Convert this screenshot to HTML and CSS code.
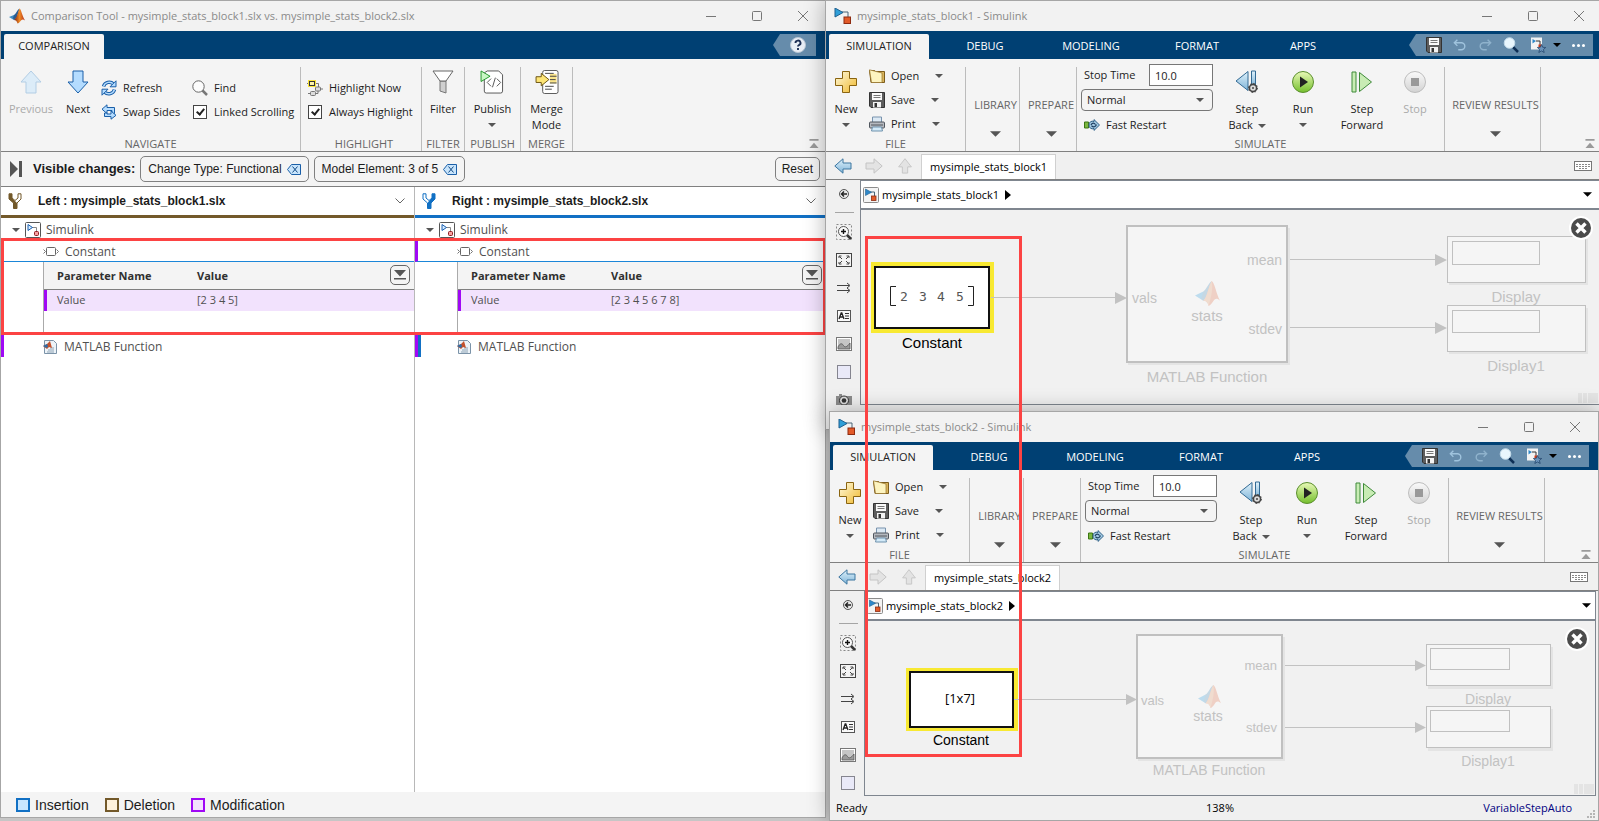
FILE: index.html
```html
<!DOCTYPE html>
<html lang="en">
<head>
<meta charset="utf-8">
<title>Comparison Tool</title>
<link rel="stylesheet" href="styles.css">
</head>
<body>
<svg class="defs" aria-hidden="true">
  <defs>
    <linearGradient id="gGold" x1="0" y1="0" x2="1" y2="1"><stop offset="0" stop-color="#fffbe0"/><stop offset="1" stop-color="#efb82c"/></linearGradient>
    <linearGradient id="gGreen" x1="0" y1="0" x2="0" y2="1"><stop offset="0" stop-color="#e9f9b8"/><stop offset="1" stop-color="#74bf2c"/></linearGradient>
    <linearGradient id="gGrey" x1="0" y1="0" x2="0" y2="1"><stop offset="0" stop-color="#fafafa"/><stop offset="1" stop-color="#d2d2d2"/></linearGradient>
    <linearGradient id="gBlue" x1="0" y1="0" x2="0" y2="1"><stop offset="0" stop-color="#e0f2fb"/><stop offset="1" stop-color="#7fb4d8"/></linearGradient>
    <linearGradient id="gMat" x1="0" y1="0" x2="1" y2="0"><stop offset="0" stop-color="#7a1b10"/><stop offset=".5" stop-color="#f08a24"/><stop offset="1" stop-color="#b5301a"/></linearGradient>
  </defs>
  <symbol id="matlab" viewBox="0 0 16 16"><path d="M0 9 5 7l3 2-3 3z" fill="#3f8cc4"/><path d="M5 7c2-1 3-5 5.500-6.500L8 9l-3 3-1-2z" fill="#2b5e93"/><path d="M10.500.500C12 1 13 7 16 12.500c-2-2-3.500-1-4.500.5-1 1.500-2 2.500-3 2.500C8 13 6.500 12 5 12c3-2 4-8 5.500-11.500z" fill="url(#gMat)"/></symbol>
  <symbol id="matlab-dim" viewBox="0 0 24 24"><path d="M0 14 8 10l4 4-4 5z" fill="#bddcee"/><path d="M8 10c3-2 5-8 8-10l-4 14-4 5-2-2z" fill="#c5d8e4"/><path d="M16 0c3 2 4 11 8 19-3-3-5-2-6.500.5S14 24 13 24c-.5-3-2-5-5-5 4-4 5-14 8-19z" fill="#efd0c5"/><path d="M16 0c1 5 1 11-3 24-.5-3-2-5-5-5 4-4 5-14 8-19z" fill="#f0dccf"/></symbol>
  <symbol id="model" viewBox="0 0 17 16"><path d="M8 4h6v5" fill="none" stroke="#4b6577"/><path d="M1 0v9l8-4.500z" fill="#2f9fd8" stroke="#1e5f8e"/><rect x="10" y="9" width="6.500" height="6.500" fill="#e25a28" stroke="#8e2b10"/></symbol>
  <symbol id="model-box" viewBox="0 0 16 16"><rect x=".5" y=".5" width="15" height="15" rx="1" fill="#f4f4f4" stroke="#8b8b8b"/><path d="M7 5h4.500v4" fill="none" stroke="#4b6577"/><path d="M2.500 2v6.500l6-3.200z" fill="#2f87c8" stroke="#1e5f8e" stroke-width=".6"/><rect x="8.500" y="9" width="4.500" height="4.500" fill="#e25a28" stroke="#8e2b10" stroke-width=".8"/></symbol>
  <symbol id="model-tree" viewBox="0 0 16 16"><rect x=".5" y=".5" width="15" height="15" rx="1" fill="#fff" stroke="#555"/><path d="M7 5.500h4.500v4" fill="none" stroke="#888"/><path d="M3 2.500v6l4.500-3z" fill="#d6ecff" stroke="#1a5fb0"/><rect x="9.500" y="9.500" width="4" height="4" rx="1" fill="#f8a0a0" stroke="#8e1b20"/></symbol>
  <symbol id="up" viewBox="0 0 22 24"><path d="M11 1 21 12h-5v11H6V12H1z" fill="#dcecf8" stroke="#b2cde4"/></symbol>
  <symbol id="down" viewBox="0 0 22 24"><path d="M11 23 21 12h-5V1H6v11H1z" fill="#b4dcff" stroke="#1a5fa8"/></symbol>
  <symbol id="refresh" viewBox="0 0 16 16"><path d="M2.500 6.500a6 6 0 0 1 10-2.500M13.500 9.500a6 6 0 0 1-10 2.500" fill="none" stroke="#1a5fa8" stroke-width="3.400"/><path d="M2.500 6.500a6 6 0 0 1 10-2.500M13.500 9.500a6 6 0 0 1-10 2.500" fill="none" stroke="#b4dcff" stroke-width="1.400"/><path d="M15 .8v6H9zM1 15.200v-6h6z" fill="#b4dcff" stroke="#1a5fa8"/></symbol>
  <symbol id="swap" viewBox="0 0 16 16"><path d="M6 .8v2.700h7.500v6H11v-3H6v3L1 5.200z" fill="#b4dcff" stroke="#1a5fa8"/><path d="M10 15.200v-2.700H3.500V9H6v1h4V7l5 4.300z" fill="#b4dcff" stroke="#1a5fa8"/></symbol>
  <symbol id="find" viewBox="0 0 16 16"><path d="m10.500 10.500 4.500 4.500" stroke="#777" stroke-width="2.500"/><circle cx="6.500" cy="6.500" r="5.700" fill="#fcfcfc" stroke="#666"/></symbol>
  <symbol id="hilite" viewBox="0 0 16 16"><path d="M8 3.500h3.500V7M1 13.500h3M8.500 13.500H11V11" fill="none" stroke="#777"/><path d="M0 3.500h2M13 9h3" stroke="#777"/><path d="M1 0h8v7H1z" fill="#f8e33c"/><rect x="2.500" y="1.500" width="5" height="4" fill="#fbf3a8" stroke="#333"/><rect x="8.500" y="7" width="5" height="4" rx="1" fill="#ddd" stroke="#777"/><rect x="3.500" y="11.500" width="5" height="4" rx="1" fill="#ddd" stroke="#777"/></symbol>
  <symbol id="filter" viewBox="0 0 22 24"><path d="M8 11h6v12l-6-2z" fill="#cfcfcf" stroke="#777"/><path d="M1 1h20l-7 10H8z" fill="#fff" stroke="#666"/></symbol>
  <symbol id="publish" viewBox="0 0 24 25"><path d="M7 1h12l4 4v17a2 2 0 0 1-2 2H6a2 2 0 0 1-2-2V3z" fill="#fff" stroke="#555"/><path d="m11 9-4 4 4 4M17 9l4 4-4 4M15.500 8l-3 10" fill="none" stroke="#555"/><path d="M.6 1v11L10 6.500z" fill="#c9f7c4" stroke="#1f9428"/></symbol>
  <symbol id="merge" viewBox="0 0 24 25"><rect x="7.500" y=".5" width="16" height="24" rx="2" fill="#fff" stroke="#555"/><path d="M15 4h7v10h-7z" fill="#fbe58a"/><path d="M10 3.500h9M10 17h9M10 20h7M15 6.500h7M15 10h6M15 13.500h7" stroke="#444"/><path d="M.6 7H6V3.500L14 10l-8 6.500V13H.6z" fill="#fde576" stroke="#6b5310"/></symbol>
  <symbol id="collapse" viewBox="0 0 10 11"><path d="M0 0h10v2H0zM5 4l5 6H0z" fill="#9a9a9a"/></symbol>
  <symbol id="skip" viewBox="0 0 12 16"><path d="M0 0v16l8-8zM9 0h3v16H9z" fill="#555"/></symbol>
  <symbol id="clear" viewBox="0 0 14 11"><path d="M4.500.5h9v10h-9l-4-5z" fill="#c8e4fb" stroke="#1a5fa8"/><path d="m5.500 2.500 5 6M10.500 2.500l-5 6" stroke="#124a85"/></symbol>
  <symbol id="fork" viewBox="0 0 14 16"><path d="M1 .8h3V5l3 2.500L10 5V.8h3V6L9 10v5.500H5.500V10L1 6z" fill="#fff" stroke="currentColor"/></symbol>
  <symbol id="fork-l" viewBox="0 0 14 16"><use href="#fork"/><path d="M1 .8h3V5l3 3 2 2v5.500H5.500V10L1 6z" fill="currentColor"/></symbol>
  <symbol id="fork-r" viewBox="0 0 14 16"><use href="#fork"/><path d="M13 .8h-3V5L7 8l-1.500 2v5.500H9V10l4-4z" fill="currentColor"/></symbol>
  <symbol id="block" viewBox="0 0 16 10"><path d="m.5 2.500 2 2-2 2M13.500 2.500l2 2-2 2" fill="none" stroke="#777"/><rect x="3.500" y=".5" width="9" height="8" rx="1" fill="#fff" stroke="#666"/></symbol>
  <symbol id="fcn" viewBox="0 0 14 14"><path d="M1.500.5h9l3 3v10h-12z" fill="#edf3f8" stroke="#7b93a8"/><path d="M7 8h4M5 10h6M4 12h7" stroke="#8da3b5"/><path d="m0 6 4-2 3-3 2 7-3-1-2 2z" fill="#c4512c"/><path d="m0 6 4-2 1 2-1 2z" fill="#2d6ea8"/></symbol>
  <symbol id="expand" viewBox="0 0 12 10"><path d="M0 0h12L6 6.500zM0 8h12v1.600H0z" fill="#555"/></symbol>
  <symbol id="caret" viewBox="0 0 8 4"><path d="M0 0h8L4 4z" fill="currentColor"/></symbol>
  <symbol id="chev" viewBox="0 0 10 6"><path d="m.5.5 4.500 4.500L9.500.5" fill="none" stroke="#666"/></symbol>
  <symbol id="min" viewBox="0 0 10 10"><path d="M0 5.500h10" stroke="#777"/></symbol>
  <symbol id="max" viewBox="0 0 10 10"><rect x=".5" y=".5" width="9" height="9" rx="1" fill="none" stroke="#777"/></symbol>
  <symbol id="x" viewBox="0 0 10 10"><path d="m0 0 10 10M10 0 0 10" stroke="#777"/></symbol>
  <symbol id="help" viewBox="0 0 16 16"><circle cx="8" cy="8" r="7.500" fill="#e8eef5" stroke="#b9c6d4"/><path d="M5.500 6a2.500 2.300 0 1 1 3.500 2c-.8.400-1 .7-1 1.500M8 11v2" fill="none" stroke="#1c2f55" stroke-width="1.900"/></symbol>
  <symbol id="new" viewBox="0 0 22 22"><path d="M7.500.5h7v7h7v7h-7v7h-7v-7h-7v-7h7z" fill="url(#gGold)" stroke="#8a6410"/></symbol>
  <symbol id="open" viewBox="0 0 16 14"><path d="M.5 1.500h5l1 1h9v11H2z" fill="#d9b45c" stroke="#7c5d1b"/><path d="M.5.8 13 4v9.500H2.500z" fill="#fdf4c0" stroke="#94702a" stroke-width=".7"/></symbol>
  <symbol id="save" viewBox="0 0 16 16"><path d="M.5.5h15v15H2l-1.500-1.500z" fill="#5d5d5d" stroke="#333"/><path d="M3 1h10v7H3z" fill="#fafafa"/><path d="M4.500 3.500h7M4.500 5.500h7" stroke="#777"/><path d="M4 10h8v5.500H4z" fill="#f2f2f2"/><path d="M5.500 11h2.500v4H5.500z" fill="#333"/></symbol>
  <symbol id="print" viewBox="0 0 16 15"><path d="M3.500.5h9v6h-9z" fill="#dce9f4" stroke="#7893ad"/><rect x=".5" y="5.500" width="15" height="6" rx="1" fill="#b5b9bf" stroke="#50565e"/><path d="M2 8.500h12" stroke="#50565e"/><path d="M3.500 10.500h9l1 4h-11z" fill="#d3eaf8" stroke="#6f92ad"/></symbol>
  <symbol id="fast" viewBox="0 0 16 12"><path d="M.5 3h4v6h-4z" fill="#7bb63e" stroke="#3b7612"/><path d="M5 6a3.500 3.500 0 0 1 5-3.500V.6L15.500 6 10 11.400V9.500A3.500 3.500 0 0 1 5 6z" fill="#a5cbe4" stroke="#2d5f85"/><path d="M7 6c1-2.500 3-2.500 4.500-.5M12.500 5.500c-1 2.500-3 3-5 1.200" fill="none" stroke="#1d3f60" stroke-width="1.200"/></symbol>
  <symbol id="stepback" viewBox="0 0 24 23"><path d="M1 10.500 13 1v19z" fill="url(#gBlue)" stroke="#336a94"/><path d="M16.500.5h4v15h-4z" fill="url(#gBlue)" stroke="#336a94"/><circle cx="18" cy="17.500" r="3.600" fill="#ddd" stroke="#444" stroke-width="1.600"/><circle cx="18" cy="17.500" r="4.500" fill="none" stroke="#444" stroke-dasharray="1.500 2"/><circle cx="18" cy="17.500" r="1" fill="#444"/></symbol>
  <symbol id="run" viewBox="0 0 22 22"><circle cx="11" cy="11" r="10.500" fill="url(#gGreen)" stroke="#5b8f2e"/><path d="M8 5.500v11l8-5.500z" fill="#222"/></symbol>
  <symbol id="stepfwd" viewBox="0 0 22 22"><path d="M1 1h4v20H1z" fill="#c8ecb4" stroke="#3f8a3a"/><path d="M8.500 1.500v19L20.500 11z" fill="#c8ecb4" stroke="#3f8a3a"/></symbol>
  <symbol id="stop" viewBox="0 0 22 22"><circle cx="11" cy="11" r="10.500" fill="url(#gGrey)" stroke="#bdbdbd"/><path d="M7 7h8v8H7z" fill="#999"/></symbol>
  <symbol id="undo" viewBox="0 0 16 14"><path d="M1.500 4.500h8a4 4 0 0 1 0 8H6M5 1 1.500 4.500 5 8" fill="none" stroke="#9fc3dd" stroke-width="1.600"/></symbol>
  <symbol id="redo" viewBox="0 0 16 14"><path d="M14.500 4.500h-8a4 4 0 0 0 0 8H10M11 1l3.500 3.500L11 8" fill="none" stroke="#8fb2cc" stroke-width="1.600"/></symbol>
  <symbol id="lens" viewBox="0 0 16 16"><path d="m10 10 5 5" stroke="#0f2f55" stroke-width="2.500"/><circle cx="6.500" cy="6" r="5.300" fill="#e9f6fd" stroke="#c4dbe9"/></symbol>
  <symbol id="modelstar" viewBox="0 0 16 16"><path d="M1 .5h11v12H1z" fill="#f3f3f3"/><path d="M6 4h4v4" fill="none" stroke="#333"/><path d="M2.500 2v4.500L6 4z" fill="#2f87c8"/><path d="M8.500 7.500h3v3h-3z" fill="#d23a1a"/><path d="m11.500 7.500 1.200 2.800 3 .2-2.300 2 .8 3-2.700-1.600-2.700 1.600.8-3-2.300-2 3-.2z" fill="#6b93bb" stroke="#1c3f66" stroke-width=".7"/></symbol>
  <symbol id="dots" viewBox="0 0 13 3"><circle cx="1.500" cy="1.500" r="1.500" fill="#fff"/><circle cx="6.500" cy="1.500" r="1.500" fill="#fff"/><circle cx="11.500" cy="1.500" r="1.500" fill="#fff"/></symbol>
  <symbol id="left" viewBox="0 0 18 16"><path d="M.8 8 9 .8V5h8v6H9v4.200z" fill="url(#gBlue)" stroke="#3d76a0"/></symbol>
  <symbol id="right" viewBox="0 0 18 16"><path d="M17.200 8 9 .8V5H1v6h8v4.200z" fill="#e3e3e3" stroke="#c4c4c4"/></symbol>
  <symbol id="upnav" viewBox="0 0 16 18"><path d="M8 .8 15.200 10H11v7H5v-7H.8z" fill="#e3e3e3" stroke="#c4c4c4"/></symbol>
  <symbol id="keys" viewBox="0 0 18 10"><rect x=".5" y=".5" width="17" height="9" fill="#fff" stroke="#777"/><path d="M2 3.500h14M2 5.500h14M5 7.500h8" stroke="#888" stroke-dasharray="2 1"/></symbol>
  <symbol id="hide" viewBox="0 0 10 10"><circle cx="5" cy="5" r="4.500" fill="#e9e9e9" stroke="#555"/><path d="M8 5H3M5 2.500 2.500 5 5 7.500" fill="none" stroke="#222" stroke-width="1.400"/></symbol>
  <symbol id="zoomin" viewBox="0 0 16 16"><rect x=".5" y=".5" width="15" height="15" fill="none" stroke="#888" stroke-dasharray="2 2"/><path d="m11 11 4 4" stroke="#333" stroke-width="2.500"/><circle cx="7.500" cy="7.500" r="5" fill="#fafafa" stroke="#555"/><path d="M7.500 5v5M5 7.500h5" stroke="#111" stroke-width="1.400"/></symbol>
  <symbol id="fit" viewBox="0 0 16 14"><rect x=".5" y=".5" width="15" height="13" fill="#f4f4f4" stroke="#444"/><path d="M3 5V3h2.500M10.500 3H13v2M13 9v2h-2.500M5.500 11H3V9M3.500 3.500 6 6M12.500 3.500 10 6M12.500 10.500 10 8M3.500 10.500 6 8" fill="none" stroke="#444"/></symbol>
  <symbol id="arrows" viewBox="0 0 14 10"><path d="M0 2.500h12M0 7.500h12M10 0l3 2.500L10 5M10 5l3 2.500-3 2.500" fill="none" stroke="#444"/></symbol>
  <symbol id="anno" viewBox="0 0 14 12"><rect x=".5" y=".5" width="13" height="11" fill="#fafafa" stroke="#555"/><path d="m2 9 2.200-6h.6L7 9M3 7h3" fill="none" stroke="#222" stroke-width="1.300"/><path d="M8 3.500h4M8 6h4M8 8.500h4" stroke="#333"/></symbol>
  <symbol id="image" viewBox="0 0 16 14"><rect x=".5" y=".5" width="15" height="13" fill="#fff" stroke="#777"/><path d="M2 2h12v10H2z" fill="#c5c5c5"/><path d="M2 10c2-4 4-4 5.500-1.500S11 10 14 6v6H2z" fill="#9a9a9a" stroke="#555" stroke-width=".8"/></symbol>
  <symbol id="area" viewBox="0 0 14 14"><rect x=".5" y=".5" width="13" height="13" fill="#e9e9f8" stroke="#85858f"/></symbol>
  <symbol id="camera" viewBox="0 0 16 12"><path d="M0 2h3V0h3v2h10v10H0z" fill="#8b8b8b"/><circle cx="8" cy="6.500" r="4.500" fill="#ddd" stroke="#333"/><circle cx="8" cy="6.500" r="2.300" fill="#333"/></symbol>
  <symbol id="close" viewBox="0 0 24 24"><circle cx="12" cy="12" r="12" fill="#fff"/><circle cx="12" cy="12" r="10" fill="#4b4b4b"/><path d="m7.500 7.500 9 9M16.500 7.500l-9 9" stroke="#fff" stroke-width="3.400"/></symbol>
  <symbol id="bars" viewBox="0 0 20 10"><path d="M0 0h4v10H0zM5 0h4v10H5zM10 0h10v10H10z" fill="#e4e4e4"/></symbol>
  <symbol id="grip" viewBox="0 0 9 9"><path d="M6 0h2v2H6zM3 3h2v2H3zM6 3h2v2H6zM0 6h2v2H0zM3 6h2v2H3zM6 6h2v2H6z" fill="#b5b5b5"/></symbol>
</svg>

<main class="desktop">
  <section class="win compare">
    <header class="titlebar"><svg class="i16"><use href="#matlab"/></svg><h1>Comparison Tool - mysimple_stats_block1.slx vs. mysimple_stats_block2.slx</h1>
      <div class="winbtns"><button aria-label="Minimize"><svg><use href="#min"/></svg></button><button aria-label="Maximize"><svg><use href="#max"/></svg></button><button aria-label="Close"><svg><use href="#x"/></svg></button></div></header>
    <nav class="tabs"><button class="tab on">COMPARISON</button><div class="qat help"><button aria-label="Help"><svg class="i16"><use href="#help"/></svg></button></div></nav>
    <div class="ribbon">
      <div class="group g-nav"><div class="body">
        <button class="big off"><svg class="i22"><use href="#up"/></svg><span>Previous</span></button>
        <button class="big next"><svg class="i22"><use href="#down"/></svg><span>Next</span></button>
        <div class="rows two"><button class="row"><svg class="i16"><use href="#refresh"/></svg>Refresh</button><button class="row"><svg class="i16"><use href="#swap"/></svg>Swap Sides</button></div>
        <div class="rows two"><button class="row"><svg class="i16"><use href="#find"/></svg>Find</button><label class="row"><input type="checkbox" checked>Linked Scrolling</label></div>
      </div><h2>NAVIGATE</h2></div>
      <div class="group g-hi"><div class="body"><div class="rows two"><button class="row"><svg class="i16"><use href="#hilite"/></svg>Highlight Now</button><label class="row"><input type="checkbox" checked>Always Highlight</label></div></div><h2>HIGHLIGHT</h2></div>
      <div class="group g-fil"><div class="body mid"><button class="big"><svg class="i22"><use href="#filter"/></svg><span>Filter</span></button></div><h2>FILTER</h2></div>
      <div class="group g-pub"><div class="body mid"><button class="big"><svg class="i24"><use href="#publish"/></svg><span>Publish</span><svg class="car"><use href="#caret"/></svg></button></div><h2>PUBLISH</h2></div>
      <div class="group g-mer"><div class="body mid"><button class="big"><svg class="i24"><use href="#merge"/></svg><span>Merge<br>Mode</span></button></div><h2>MERGE</h2></div>
      <button class="collapse" aria-label="Collapse"><svg><use href="#collapse"/></svg></button>
    </div>
    <div class="filters">
      <button class="skip" aria-label="Hide filters"><svg><use href="#skip"/></svg></button><strong>Visible changes:</strong>
      <button class="chip">Change Type: Functional <svg><use href="#clear"/></svg></button>
      <button class="chip">Model Element: 3 of 5 <svg><use href="#clear"/></svg></button>
      <button class="chip reset">Reset</button>
    </div>
    <div class="panes">
      <article class="pane left">
        <header><svg class="fork"><use href="#fork-l"/></svg><h3>Left : mysimple_stats_block1.slx</h3><svg class="chev"><use href="#chev"/></svg></header>
        <div class="node root"><svg class="car"><use href="#caret"/></svg><svg class="i16"><use href="#model-tree"/></svg>Simulink</div>
        <div class="node leaf sel"><svg class="blk"><use href="#block"/></svg>Constant</div>
        <div class="params"><table><thead><tr><th>Parameter Name</th><th>Value</th><th class="act"><button aria-label="Expand"><svg><use href="#expand"/></svg></button></th></tr></thead><tbody><tr><td>Value</td><td colspan="2">[2 3 4 5]</td></tr></tbody></table></div>
        <div class="node leaf mod"><svg class="fcn"><use href="#fcn"/></svg>MATLAB Function</div>
      </article>
      <article class="pane right">
        <header><svg class="fork"><use href="#fork-r"/></svg><h3>Right : mysimple_stats_block2.slx</h3><svg class="chev"><use href="#chev"/></svg></header>
        <div class="node root"><svg class="car"><use href="#caret"/></svg><svg class="i16"><use href="#model-tree"/></svg>Simulink</div>
        <div class="node leaf sel mod"><svg class="blk"><use href="#block"/></svg>Constant</div>
        <div class="params"><table><thead><tr><th>Parameter Name</th><th>Value</th><th class="act"><button aria-label="Expand"><svg><use href="#expand"/></svg></button></th></tr></thead><tbody><tr><td>Value</td><td colspan="2">[2 3 4 5 6 7 8]</td></tr></tbody></table></div>
        <div class="node leaf mod cur"><svg class="fcn"><use href="#fcn"/></svg>MATLAB Function</div>
      </article>
    </div>
    <footer class="legend"><span><i class="ins"></i>Insertion</span><span><i class="del"></i>Deletion</span><span><i class="chg"></i>Modification</span></footer>
    <div class="mark wide"></div>
  </section>

  <div class="stack">
    <section class="win sim one">
      <header class="titlebar"><svg class="mdl"><use href="#model"/></svg><h1>mysimple_stats_block1 - Simulink</h1>
        <div class="winbtns"><button aria-label="Minimize"><svg><use href="#min"/></svg></button><button aria-label="Maximize"><svg><use href="#max"/></svg></button><button aria-label="Close"><svg><use href="#x"/></svg></button></div></header>
      <nav class="tabs"><button class="tab on">SIMULATION</button><button class="tab">DEBUG</button><button class="tab">MODELING</button><button class="tab">FORMAT</button><button class="tab">APPS</button>
        <div class="qat"><button aria-label="Save"><svg class="i16"><use href="#save"/></svg></button><button aria-label="Undo"><svg class="i14"><use href="#undo"/></svg></button><button aria-label="Redo"><svg class="i14"><use href="#redo"/></svg></button><button aria-label="Search"><svg class="i16"><use href="#lens"/></svg></button><button class="fav" aria-label="Favorites"><svg class="i16"><use href="#modelstar"/></svg><svg class="car"><use href="#caret"/></svg></button><button class="dots" aria-label="More"><svg><use href="#dots"/></svg></button></div></nav>
      <div class="ribbon">
        <div class="group g-file"><div class="body">
          <button class="big new"><svg class="i22"><use href="#new"/></svg><span>New</span><svg class="car"><use href="#caret"/></svg></button>
          <div class="rows"><button class="row"><svg class="i16"><use href="#open"/></svg>Open<svg class="car far"><use href="#caret"/></svg></button><button class="row"><svg class="i16"><use href="#save"/></svg>Save<svg class="car far"><use href="#caret"/></svg></button><button class="row"><svg class="i16"><use href="#print"/></svg>Print<svg class="car far"><use href="#caret"/></svg></button></div>
        </div><h2>FILE</h2></div>
        <button class="group fold g-lib">LIBRARY<svg class="tri"><use href="#caret"/></svg></button>
        <button class="group fold g-pre">PREPARE<svg class="tri"><use href="#caret"/></svg></button>
        <div class="group g-sim"><div class="body">
          <div class="form"><label class="stime">Stop Time<input type="text" value="10.0"></label><label class="mode"><select aria-label="Simulation mode"><option>Normal</option></select><svg class="car"><use href="#caret"/></svg></label><button class="row"><svg class="i16"><use href="#fast"/></svg>Fast Restart</button></div>
          <button class="big b1"><svg class="i24"><use href="#stepback"/></svg><span>Step<br>Back <svg class="car"><use href="#caret"/></svg></span></button>
          <button class="big b2"><svg class="i22"><use href="#run"/></svg><span>Run</span><svg class="car"><use href="#caret"/></svg></button>
          <button class="big b3"><svg class="i22"><use href="#stepfwd"/></svg><span>Step<br>Forward</span></button>
          <button class="big b4 off"><svg class="i22"><use href="#stop"/></svg><span>Stop</span></button>
        </div><h2>SIMULATE</h2></div>
        <button class="group fold g-rev">REVIEW RESULTS<svg class="tri"><use href="#caret"/></svg></button>
        <button class="collapse" aria-label="Collapse"><svg><use href="#collapse"/></svg></button>
      </div>
      <div class="docbar"><button aria-label="Back"><svg class="nav"><use href="#left"/></svg></button><button aria-label="Forward"><svg class="nav"><use href="#right"/></svg></button><button aria-label="Up"><svg class="nav"><use href="#upnav"/></svg></button><button class="doc">mysimple_stats_block1</button><button class="keys" aria-label="Keyboard"><svg><use href="#keys"/></svg></button></div>
      <div class="work">
        <aside class="palette"><button aria-label="Hide"><svg class="s10"><use href="#hide"/></svg></button><hr><button aria-label="Zoom"><svg class="i16"><use href="#zoomin"/></svg></button><button aria-label="Fit"><svg class="i16"><use href="#fit"/></svg></button><button aria-label="Sample time"><svg class="i14"><use href="#arrows"/></svg></button><button aria-label="Annotation"><svg class="i14"><use href="#anno"/></svg></button><button aria-label="Image"><svg class="i16"><use href="#image"/></svg></button><button aria-label="Area"><svg class="i14"><use href="#area"/></svg></button><button aria-label="Screenshot"><svg class="i16"><use href="#camera"/></svg></button></aside>
        <div class="editor">
          <div class="crumbs"><svg class="i16"><use href="#model-box"/></svg><a href="#">mysimple_stats_block1</a><span class="arrow"></span><button aria-label="History"><svg><use href="#caret"/></svg></button></div>
          <div class="canvas">
            <svg class="diagram"><g transform="translate(-861 -210)">
              <rect x="871" y="262" width="123" height="71" class="halo"/><rect x="875" y="267" width="114" height="61" class="const"/>
              <path d="M896 286.500h-5.500v19h5.500M968 286.500h5.500v19H968" class="brk"/>
              <g class="mono"><text x="904" y="301">2</text><text x="923" y="301">3</text><text x="941" y="301">4</text><text x="960" y="301">5</text></g>
              <text x="932" y="348" class="live t15">Constant</text>
              <path d="M991 297.500h125M1288 259.500h148M1288 327.500h148" class="wire"/><path d="M1115 292v12l12-6zM1435 254v12l12-6zM1435 322v12l12-6z" class="tip"/>
              <rect x="1128" y="228" width="162" height="137" class="shade"/><rect x="1127" y="226" width="160" height="136" class="fn"/>
              <g class="t14"><text x="1132" y="303">vals</text><text x="1282" y="265" class="end">mean</text><text x="1282" y="334" class="end">stdev</text></g><text x="1207" y="321" class="mid t15">stats</text>
              <use href="#matlab-dim" x="1195" y="281" width="25" height="25"/><text x="1207" y="382" class="mid t15">MATLAB Function</text>
              <g class="disp"><rect x="1449" y="239" width="139" height="46" class="shade"/><rect x="1447.500" y="236.500" width="138" height="46"/><rect x="1452.500" y="241.500" width="87" height="23"/><rect x="1449" y="308" width="139" height="46" class="shade"/><rect x="1447.500" y="305.500" width="138" height="46"/><rect x="1452.500" y="310.500" width="87" height="22"/></g>
              <text x="1516" y="302" class="mid t15">Display</text><text x="1516" y="371" class="mid t15">Display1</text>
            </g></svg>
            <button class="dismiss" aria-label="Close"><svg><use href="#close"/></svg></button><svg class="bars"><use href="#bars"/></svg>
          </div>
        </div>
      </div>
      <div class="status"></div>
    </section>

    <section class="win sim two">
      <header class="titlebar"><svg class="mdl"><use href="#model"/></svg><h1>mysimple_stats_block2 - Simulink</h1>
        <div class="winbtns"><button aria-label="Minimize"><svg><use href="#min"/></svg></button><button aria-label="Maximize"><svg><use href="#max"/></svg></button><button aria-label="Close"><svg><use href="#x"/></svg></button></div></header>
      <nav class="tabs"><button class="tab on">SIMULATION</button><button class="tab">DEBUG</button><button class="tab">MODELING</button><button class="tab">FORMAT</button><button class="tab">APPS</button>
        <div class="qat"><button aria-label="Save"><svg class="i16"><use href="#save"/></svg></button><button aria-label="Undo"><svg class="i14"><use href="#undo"/></svg></button><button aria-label="Redo"><svg class="i14"><use href="#redo"/></svg></button><button aria-label="Search"><svg class="i16"><use href="#lens"/></svg></button><button class="fav" aria-label="Favorites"><svg class="i16"><use href="#modelstar"/></svg><svg class="car"><use href="#caret"/></svg></button><button class="dots" aria-label="More"><svg><use href="#dots"/></svg></button></div></nav>
      <div class="ribbon">
        <div class="group g-file"><div class="body">
          <button class="big new"><svg class="i22"><use href="#new"/></svg><span>New</span><svg class="car"><use href="#caret"/></svg></button>
          <div class="rows"><button class="row"><svg class="i16"><use href="#open"/></svg>Open<svg class="car far"><use href="#caret"/></svg></button><button class="row"><svg class="i16"><use href="#save"/></svg>Save<svg class="car far"><use href="#caret"/></svg></button><button class="row"><svg class="i16"><use href="#print"/></svg>Print<svg class="car far"><use href="#caret"/></svg></button></div>
        </div><h2>FILE</h2></div>
        <button class="group fold g-lib">LIBRARY<svg class="tri"><use href="#caret"/></svg></button>
        <button class="group fold g-pre">PREPARE<svg class="tri"><use href="#caret"/></svg></button>
        <div class="group g-sim"><div class="body">
          <div class="form"><label class="stime">Stop Time<input type="text" value="10.0"></label><label class="mode"><select aria-label="Simulation mode"><option>Normal</option></select><svg class="car"><use href="#caret"/></svg></label><button class="row"><svg class="i16"><use href="#fast"/></svg>Fast Restart</button></div>
          <button class="big b1"><svg class="i24"><use href="#stepback"/></svg><span>Step<br>Back <svg class="car"><use href="#caret"/></svg></span></button>
          <button class="big b2"><svg class="i22"><use href="#run"/></svg><span>Run</span><svg class="car"><use href="#caret"/></svg></button>
          <button class="big b3"><svg class="i22"><use href="#stepfwd"/></svg><span>Step<br>Forward</span></button>
          <button class="big b4 off"><svg class="i22"><use href="#stop"/></svg><span>Stop</span></button>
        </div><h2>SIMULATE</h2></div>
        <button class="group fold g-rev">REVIEW RESULTS<svg class="tri"><use href="#caret"/></svg></button>
        <button class="collapse" aria-label="Collapse"><svg><use href="#collapse"/></svg></button>
      </div>
      <div class="docbar"><button aria-label="Back"><svg class="nav"><use href="#left"/></svg></button><button aria-label="Forward"><svg class="nav"><use href="#right"/></svg></button><button aria-label="Up"><svg class="nav"><use href="#upnav"/></svg></button><button class="doc">mysimple_stats_block2</button><button class="keys" aria-label="Keyboard"><svg><use href="#keys"/></svg></button></div>
      <div class="work">
        <aside class="palette"><button aria-label="Hide"><svg class="s10"><use href="#hide"/></svg></button><hr><button aria-label="Zoom"><svg class="i16"><use href="#zoomin"/></svg></button><button aria-label="Fit"><svg class="i16"><use href="#fit"/></svg></button><button aria-label="Sample time"><svg class="i14"><use href="#arrows"/></svg></button><button aria-label="Annotation"><svg class="i14"><use href="#anno"/></svg></button><button aria-label="Image"><svg class="i16"><use href="#image"/></svg></button><button aria-label="Area"><svg class="i14"><use href="#area"/></svg></button></aside>
        <div class="editor">
          <div class="crumbs"><svg class="i16"><use href="#model-box"/></svg><a href="#">mysimple_stats_block2</a><span class="arrow"></span><button aria-label="History"><svg><use href="#caret"/></svg></button></div>
          <div class="canvas">
            <svg class="diagram"><g transform="translate(-865 -621)">
              <rect x="906" y="668" width="112" height="63" class="halo"/><rect x="910" y="672" width="103" height="55" class="const"/>
              <text x="960" y="703" class="live t13 open">[1x7]</text><text x="961" y="745" class="live t14">Constant</text>
              <path d="M1014 699.500h112M1282 665.500h133M1282 727.500h133" class="wire"/><path d="M1126 694v11l11-5.500zM1415 660v11l11-5.500zM1415 722v11l11-5.500z" class="tip"/>
              <rect x="1138" y="637" width="147" height="124" class="shade"/><rect x="1137" y="635" width="145" height="123" class="fn"/>
              <g class="t13"><text x="1141" y="705">vals</text><text x="1277" y="670" class="end">mean</text><text x="1277" y="732" class="end">stdev</text></g><text x="1208" y="721" class="mid t14">stats</text>
              <use href="#matlab-dim" x="1198" y="685" width="23" height="23"/><text x="1209" y="775" class="mid t14">MATLAB Function</text>
              <g class="disp"><rect x="1428" y="647" width="125" height="42" class="shade"/><rect x="1426.500" y="644.500" width="124" height="41"/><rect x="1430.500" y="648.500" width="79" height="21"/><rect x="1428" y="709" width="125" height="42" class="shade"/><rect x="1426.500" y="706.500" width="124" height="41"/><rect x="1430.500" y="710.500" width="79" height="21"/></g>
              <text x="1488" y="704" class="mid t14">Display</text><text x="1488" y="766" class="mid t14">Display1</text>
            </g></svg>
            <button class="dismiss" aria-label="Close"><svg><use href="#close"/></svg></button><svg class="bars"><use href="#bars"/></svg>
          </div>
        </div>
      </div>
      <div class="status"><span>Ready</span><span>138%</span><a href="#">VariableStepAuto</a><svg class="grip"><use href="#grip"/></svg></div>
    </section>
    <div class="mark tall"></div>
  </div>
</main>
</body>
</html>
```
FILE: styles.css
```css
* { box-sizing: border-box; }
html, body { height: 100%; margin: 0; }
body { font-family: "Open Sans", "Noto Sans", sans-serif; font-size: 11px; line-height: 16px; color: #1c1c1c; background: #c6c6c6; overflow: hidden; }
button { font: inherit; color: inherit; background: none; border: 0; padding: 0; margin: 0; }
h1, h2, h3 { margin: 0; font-weight: 400; font-size: inherit; }
svg { display: block; flex: none; overflow: visible; }
a { color: inherit; text-decoration: none; }
.defs { position: absolute; width: 0; height: 0; }
.i14 { width: 14px; height: 14px; }
.i16 { width: 16px; height: 16px; }
.i22 { width: 22px; height: 24px; }
.i24 { width: 24px; height: 24px; }
.s10 { width: 10px; height: 10px; }
.car { width: 8px; height: 4px; color: #555; }

.desktop { display: grid; grid-template-columns: 826fr 773fr; height: 100%; min-height: 760px; }
.win { display: flex; flex-direction: column; background: #f4f4f4; border: 1px solid #a6a6a6; }
.compare { position: relative; margin-bottom: 3px; min-width: 0; }
.stack { position: relative; min-width: 0; }
.sim { position: absolute; box-shadow: 0 0 20px rgba(0, 0, 0, .3); }
.one { left: -1px; right: -4px; top: 0; height: 430px; }
.two { left: 3px; right: 0; top: 411px; bottom: 0; }

.titlebar { display: flex; align-items: center; height: 30px; padding: 0 17px 0 8px; background: #f2f2f2; flex: none; }
.titlebar h1 { flex: 1; padding-left: 6px; color: #8a8a8a; white-space: nowrap; }
.mdl { width: 17px; height: 16px; }
.sim .titlebar { padding-right: 18px; }
.winbtns { display: flex; gap: 36px; }
.winbtns button, .winbtns svg { width: 10px; height: 10px; }

.tabs { display: flex; align-items: flex-end; gap: 6px; height: 28px; padding: 0 9px 0 3px; background: #004073; flex: none; }
.tab { width: 100px; height: 25px; padding-bottom: 2px; color: #fff; }
.tab.on { background: #f4f4f4; color: #222; border-radius: 2px 2px 0 0; }
.qat { display: flex; align-items: center; align-self: center; gap: 11px; height: 22px; margin-left: auto; padding: 0 8px 0 17px; background: #668cab; clip-path: polygon(0 50%, 7px 0, 100% 0, 100% 100%, 7px 100%); }
.qat.help { padding: 0 10px 0 17px; }
.fav { display: flex; align-items: center; gap: 7px; }
.fav .car { color: #000; }
.dots svg { width: 13px; height: 3px; }

.ribbon { position: relative; display: flex; height: 93px; padding-top: 8px; border-bottom: 1px solid #808080; flex: none; }
.group { display: flex; flex-direction: column; border-right: 1px solid #bcbcbc; flex: none; }
.group .body { display: flex; flex: 1; }
.group .mid { justify-content: center; }
.group h2 { height: 15px; text-align: center; color: #666; }
.big { display: flex; flex-direction: column; align-items: center; padding-top: 3px; text-align: center; }
.big > span { margin-top: 7px; white-space: nowrap; }
.big > span .car { display: inline-block; margin-left: 2px; vertical-align: middle; }
.big > .car { margin-top: 6px; }
.off { color: #aaa; }
.rows { display: flex; flex-direction: column; gap: 8px; padding-top: 1px; }
.rows.two { padding-top: 13px; }
.row { display: flex; align-items: center; gap: 6px; height: 16px; white-space: nowrap; }
.row .far { margin-left: 10px; }
.row input { appearance: none; flex: none; width: 14px; height: 14px; margin: 0 1px; border: 1px solid #444; background: #fff; position: relative; }
.row input::after { content: ""; position: absolute; left: 4px; top: 1px; width: 3px; height: 6px; border: solid #222; border-width: 0 2px 2px 0; transform: rotate(40deg); }
.g-nav { width: 300px; }
.g-nav .big { width: 48px; margin-left: 6px; }
.g-nav .next { width: 34px; margin-left: 6px; }
.g-nav .rows { margin-left: 6px; width: 85px; }
.g-hi { width: 121px; padding-left: 6px; }
.g-fil { width: 43px; }
.g-pub { width: 56px; }
.g-mer { width: 52px; }
.g-file { width: 140px; }
.g-file .body { padding-left: 8px; }
.g-file .new { width: 24px; }
.g-file .rows { margin-left: 11px; }
.g-lib { width: 54px; }
.g-pre { width: 57px; }
.g-sim { width: 368px; }
.g-rev { width: 96px; }
.fold { align-items: center; color: #666; padding: 30px 0 0 6px; white-space: nowrap; }
.tri { width: 11px; height: 6px; color: #555; margin-top: 18px; }
.form { width: 132px; margin: -3px 0 0 4px; }
.stime { display: flex; align-items: center; justify-content: space-between; padding-left: 3px; }
.stime input { width: 64px; height: 22px; border: 1px solid #777; background: #fff; padding: 0 5px; font: inherit; color: #222; }
.mode { display: block; position: relative; margin-top: 3px; }
.mode select { appearance: none; display: block; width: 100%; height: 22px; border: 1px solid #777; border-radius: 4px; background: #f4f4f4; font: inherit; color: #222; padding: 0 5px; }
.mode .car { position: absolute; right: 9px; top: 9px; }
.form .row { margin: 6px 0 0 3px; }
.b1 { width: 64px; margin-left: 2px; }
.b2 { width: 48px; }
.b3 { width: 70px; }
.b4 { width: 36px; }
.collapse { position: absolute; right: 6px; bottom: 2px; }
.sim .collapse { right: 7px; }
.collapse svg { width: 10px; height: 10px; }

.filters { display: flex; align-items: center; gap: 5px; height: 35px; padding: 0 5px 0 9px; border-bottom: 1px solid #808080; font-family: "Liberation Sans", Arial, sans-serif; font-size: 12px; flex: none; }
.filters strong { font-size: 13px; margin-left: 6px; }
.skip svg { width: 12px; height: 16px; }
.chip { display: flex; align-items: center; gap: 5px; height: 26px; padding: 0 7px; border: 1px solid #808080; border-radius: 5px; white-space: nowrap; }
.chip svg { width: 14px; height: 11px; }
.reset { height: 24px; margin-left: auto; padding: 0 6px; }

.panes { display: grid; grid-template-columns: 414fr 410fr; flex: 1; min-height: 0; background: #fff; }
.pane { min-width: 0; color: #505050; font-size: 12px; }
.pane.left { border-right: 1px solid #b8b8b8; }
.pane > header { display: flex; align-items: center; height: 31px; padding: 0 9px 0 7px; border-bottom: 3px solid; }
.left > header { border-color: #73592a; color: #73592a; }
.right > header { border-color: #1170c4; color: #1170c4; }
.fork { width: 14px; height: 16px; }
.pane h3 { flex: 1; margin-left: 16px; font: bold 12px/16px "Liberation Sans", Arial, sans-serif; color: #1c1c1c; white-space: nowrap; }
.chev { width: 10px; height: 6px; }
.node { display: flex; align-items: center; gap: 6px; }
.root { height: 23px; padding-left: 11px; }
.root .i16 { margin: 0 -1px; }
.leaf { height: 21px; padding: 2px 0 0 42px; }
.mod { border-left: 3px solid #a008f5; padding-left: 39px; }
.mod.cur { box-shadow: inset 3px 0 #1170c4; }
.left .leaf.mod, .right .leaf.cur { height: 22px; margin-top: 2px; }
.sel { border-bottom: 1px solid #1b86d8; }
.blk { width: 16px; height: 10px; }
.fcn { width: 14px; height: 14px; margin-right: 1px; }
.params { height: 71px; margin-left: 42px; border-left: 1px solid #aaa; }
.params table { width: 100%; border-collapse: collapse; table-layout: fixed; }
.params th, .params td { text-align: left; padding: 0 0 0 13px; font-size: 11px; }
.params th { height: 27px; padding-top: 1px; font-weight: 700; color: #303030; background: #f4f4f4; border-bottom: 1px solid #808080; }
.params th:first-child { width: 140px; }
.params td { height: 22px; background: #f2e2fd; }
.params td:first-child { box-shadow: inset 3px 0 #a008f5; }
.params .act { width: 28px; padding: 0 4px; }
.right .params .act { width: 27px; }
.act button { display: grid; place-items: center; width: 20px; height: 20px; border: 1px solid #666; border-radius: 5px; }
.act svg { width: 12px; height: 10px; }

.legend { display: flex; align-items: center; gap: 16px; height: 25px; padding-left: 15px; font-family: "Liberation Sans", Arial, sans-serif; font-size: 14px; flex: none; }
.legend span { display: flex; align-items: center; gap: 5px; }
.legend i { width: 14px; height: 14px; border: 2px solid; }
.ins { background: #c8e6ff; color: #1170c4; }
.del { background: #fff2dc; color: #73592a; }
.chg { background: #f2e2fd; color: #a008f5; }

.docbar { display: flex; align-items: center; gap: 13px; height: 27px; padding: 0 10px 0 8px; background: #f0f0f0; flex: none; }
.nav { width: 18px; height: 16px; }
.doc { align-self: flex-end; height: 25px; padding: 0 8px; background: #fff; border: 1px solid #d0d0d0; border-bottom: 0; margin-left: -6px; color: #000; }
.keys { margin-left: auto; }
.keys svg { width: 18px; height: 10px; }
.work { display: flex; flex: 1; min-height: 0; border-top: 1px solid #808080; background: #f0f0f0; }
.palette { display: flex; flex-direction: column; align-items: center; width: 34px; padding-left: 2px; overflow: hidden; flex: none; }
.palette button { display: grid; place-items: center; width: 20px; height: 28px; flex: none; }
.palette hr { width: 19px; height: 1px; margin: 4px 0 5px; border: 0; background: #a5a5a5; flex: none; }
.editor { display: flex; flex-direction: column; flex: 1; min-width: 0; border: 1px solid #7f868f; }
.two .editor { margin-right: 2px; }
.crumbs { display: flex; align-items: center; gap: 3px; height: 29px; padding: 0 9px 0 2px; background: #fff; border-bottom: 2px solid #7f868f; color: #000; flex: none; }
.two .crumbs { padding-right: 4px; }
.arrow { margin-left: 3px; border: solid transparent; border-width: 5px 0 5px 6px; border-left-color: #000; }
.crumbs button { margin-left: auto; }
.crumbs button svg { width: 9px; height: 5px; color: #000; }
.canvas { position: relative; flex: 1; min-height: 0; overflow: hidden; background: #f1f1f1; }
.diagram { width: 100%; height: 100%; font-family: "Liberation Sans", Arial, sans-serif; fill: #c2c2c2; }
.halo { fill: #f8e932; }
.const { fill: #fff; stroke: #111; stroke-width: 2; }
.brk { fill: none; stroke: #222; stroke-width: 1; }
.mono { font: 13px "DejaVu Sans Mono", monospace; text-anchor: middle; fill: #555; }
.live { fill: #000; text-anchor: middle; }
.open { font-family: "Open Sans", sans-serif; }
.mid { text-anchor: middle; }
.end { text-anchor: end; }
.t13 { font-size: 13px; }
.t14 { font-size: 14px; }
.t15 { font-size: 15px; }
.wire { stroke: #c2c2c2; fill: none; }
.tip { fill: #c2c2c2; }
.fn { fill: #f5f5f5; stroke: #c0c0c0; stroke-width: 2; }
.disp rect { fill: #f5f5f5; stroke: #c0c0c0; }
.shade, .disp .shade { fill: #e4e4e4; stroke: none; }
.dismiss { position: absolute; right: 8px; top: 6px; }
.two .dismiss { right: 6px; }
.dismiss svg { width: 24px; height: 24px; }
.bars { position: absolute; right: 1px; bottom: 1px; width: 20px; height: 10px; }
.one .bars { right: 3px; }
.status { display: grid; grid-template-columns: 1fr 60px 1fr; align-items: center; position: relative; height: 24px; padding: 0 26px 0 6px; background: #f0f0f0; color: #000; flex: none; }
.status span:nth-child(2) { text-align: right; }
.status a { text-align: right; color: #000080; }
.grip { position: absolute; right: 2px; bottom: 1px; width: 9px; height: 9px; }

.mark { position: absolute; border: 3px solid #fc4343; pointer-events: none; }
.wide { left: 0; right: -1px; top: 237px; height: 97px; }
.tall { left: 39px; width: 157px; top: 236px; height: 521px; }
```
